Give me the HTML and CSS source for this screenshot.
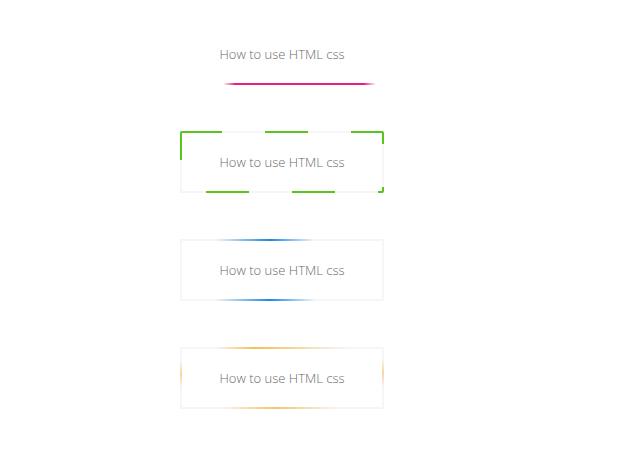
FILE: index.html
```html
<!DOCTYPE html>
<html lang="en">
<head>
  <meta charset="UTF-8" />
  <meta name="viewport" content="width=device-width, initial-scale=1.0"/>
  <title>Border Hover Effects</title>
  <link rel="stylesheet" href="styles.css">
</head>
<body>

  <!-- Button effects -->
  <div class="effects">
    <div class="btn btn-underline">How to use HTML css</div>
    <div class="btn btn-dashed">How to use HTML css</div>
    <div class="btn btn-glow">How to use HTML css</div>
    <div class="btn btn-warm">How to use HTML css</div>
  </div>

</body>
</html>
```

FILE: styles.css
```css
body {
  margin: 0;
  padding: 0;
  background: #fff;
  font-family: "Open Sans", sans-serif;
}

.effects {
  display: flex;
  flex-direction: column;
  gap: 46px;
  width: 204px;
  margin: 23px 0 0 180px;
}

.btn {
  position: relative;
  box-sizing: border-box;
  height: 62px;
  line-height: 58px;
  border: 2px solid #f6f6f6;
  text-align: center;
  font-size: 13px;
  font-weight: 300;
  color: #6a6a6a;
}

.btn::before,
.btn::after {
  content: "";
  position: absolute;
  pointer-events: none;
}

/* pink underline */
.btn-underline {
  border-color: transparent;
}

.btn-underline::before {
  left: 41px;
  right: 6px;
  bottom: -2px;
  height: 2px;
  background: linear-gradient(90deg, rgba(233, 30, 134, 0) 0, #e91e86 8%, #e91e86 92%, rgba(233, 30, 134, 0) 100%);
}

/* marching green dashes */
.btn-dashed::before {
  inset: -2px;
  border-radius: 2px;
  background:
    linear-gradient(90deg, #57c51b 50%, transparent 0) repeat-x -1px 0 / 86px 2px,
    linear-gradient(90deg, #57c51b 50%, transparent 0) repeat-x 26px 100% / 86px 2px,
    linear-gradient(180deg, #57c51b 50%, transparent 0) repeat-y 0 -14px / 2px 86px,
    linear-gradient(180deg, #57c51b 50%, transparent 0) repeat-y 100% -30px / 2px 86px;
}

/* blue glow lines */
.btn-glow::before,
.btn-glow::after {
  left: 33px;
  width: 100px;
  height: 2px;
  background: linear-gradient(90deg, rgba(30, 136, 229, 0), #1e88e5 55%, rgba(30, 136, 229, 0));
}

.btn-glow::before {
  top: -2px;
}

.btn-glow::after {
  bottom: -2px;
}

/* orange glow lines */
.btn-warm::before {
  inset: -2px;
  background:
    linear-gradient(90deg, rgba(245, 190, 90, 0), #f5be5a 30%, rgba(245, 190, 90, 0)) no-repeat 35px 0 / 132px 2px,
    linear-gradient(90deg, rgba(245, 190, 90, 0), #f5c46a 45%, rgba(245, 190, 90, 0)) no-repeat 42px 100% / 116px 2px,
    linear-gradient(180deg, rgba(245, 200, 120, 0), rgba(245, 200, 120, 0.7) 50%, rgba(245, 200, 120, 0)) no-repeat 0 14px / 2px 26px,
    linear-gradient(180deg, rgba(245, 200, 120, 0), rgba(245, 200, 120, 0.7) 50%, rgba(245, 200, 120, 0)) no-repeat 100% 12px / 2px 28px;
}
```
